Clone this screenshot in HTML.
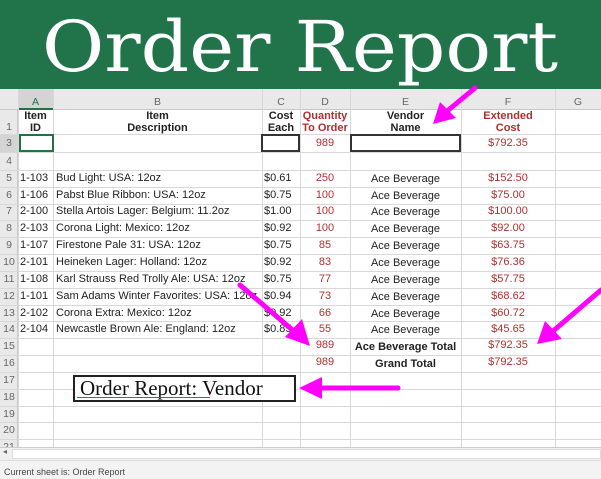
<!DOCTYPE html>
<html><head><meta charset="utf-8"><style>
*{margin:0;padding:0;box-sizing:border-box}
body{width:601px;height:479px;overflow:hidden;background:#fff;position:relative;font-family:"Liberation Sans",sans-serif;font-size:11px;color:#222}
.a{position:absolute}
.c{position:absolute;white-space:nowrap;line-height:17px;height:17px}
.r{color:#b03030}
.b{font-weight:bold}
.h{color:#666;text-align:center;font-size:10.5px}
</style></head><body>
<div class="a" style="left:0;top:0;width:601px;height:89px;background:#21734a"></div>
<svg class="a" style="left:0;top:0" width="601" height="89"><text x="42" y="71" textLength="516" lengthAdjust="spacingAndGlyphs" font-family="DejaVu Serif,serif" font-size="70" fill="#fff">Order Report</text></svg>
<div class="a" style="left:0;top:89px;width:601px;height:21px;background:#e9e9e9;border-bottom:1px solid #c8c8c8"></div>
<div class="a" style="left:0;top:110px;width:18px;height:337px;background:#e9e9e9;border-right:1px solid #c8c8c8"></div>
<div class="a" style="left:18px;top:89px;width:35px;height:21px;background:#d4d4d4;border-bottom:2px solid #217346"></div>
<div class="a" style="left:0;top:134px;width:18px;height:18px;background:#d4d4d4"></div>
<svg class="a" style="left:0;top:89px" width="601" height="358">
<g stroke="#d8d8d8" stroke-width="1">
<line x1="18.5" y1="0" x2="18.5" y2="358"/><line x1="53.5" y1="0" x2="53.5" y2="358"/><line x1="262.5" y1="0" x2="262.5" y2="358"/><line x1="300.5" y1="0" x2="300.5" y2="358"/><line x1="350.5" y1="0" x2="350.5" y2="358"/><line x1="461.5" y1="0" x2="461.5" y2="358"/><line x1="555.5" y1="0" x2="555.5" y2="358"/>
<line x1="0" y1="45.5" x2="601" y2="45.5"/><line x1="0" y1="63.5" x2="601" y2="63.5"/><line x1="0" y1="81.5" x2="601" y2="81.5"/>
<line x1="0" y1="98.5" x2="601" y2="98.5"/><line x1="0" y1="115.5" x2="601" y2="115.5"/><line x1="0" y1="131.5" x2="601" y2="131.5"/><line x1="0" y1="148.5" x2="601" y2="148.5"/><line x1="0" y1="165.5" x2="601" y2="165.5"/><line x1="0" y1="182.5" x2="601" y2="182.5"/><line x1="0" y1="199.5" x2="601" y2="199.5"/><line x1="0" y1="216.5" x2="601" y2="216.5"/><line x1="0" y1="232.5" x2="601" y2="232.5"/><line x1="0" y1="249.5" x2="601" y2="249.5"/><line x1="0" y1="266.5" x2="601" y2="266.5"/><line x1="0" y1="283.5" x2="601" y2="283.5"/><line x1="0" y1="300.5" x2="601" y2="300.5"/><line x1="0" y1="317.5" x2="601" y2="317.5"/><line x1="0" y1="333.5" x2="601" y2="333.5"/><line x1="0" y1="350.5" x2="601" y2="350.5"/>
</g></svg>
<div class="a" style="left:19px;top:134px;width:35px;height:18px;border:2px solid #217346"></div>
<div class="a" style="left:261px;top:134px;width:39px;height:18px;border:2px solid #333"></div>
<div class="a" style="left:350px;top:134px;width:111px;height:18px;border:2px solid #333"></div>
<div class="c h" style="left:18px;top:94px;width:35px;color:#217346">A</div>
<div class="c h" style="left:53px;top:94px;width:209px">B</div>
<div class="c h" style="left:262px;top:94px;width:38px">C</div>
<div class="c h" style="left:300px;top:94px;width:50px">D</div>
<div class="c h" style="left:350px;top:94px;width:111px">E</div>
<div class="c h" style="left:461px;top:94px;width:94px">F</div>
<div class="c h" style="left:555px;top:94px;width:46px">G</div>
<div class="a b" style="left:18px;top:110px;width:35px;text-align:center;line-height:12px">Item<br>ID</div>
<div class="a b" style="left:53px;top:110px;width:209px;text-align:center;line-height:12px">Item<br>Description</div>
<div class="a b" style="left:262px;top:110px;width:38px;text-align:center;line-height:12px">Cost<br>Each</div>
<div class="a b r" style="left:300px;top:110px;width:50px;text-align:center;line-height:12px">Quantity<br>To Order</div>
<div class="a b" style="left:350px;top:110px;width:111px;text-align:center;line-height:12px">Vendor<br>Name</div>
<div class="a b r" style="left:461px;top:110px;width:94px;text-align:center;line-height:12px">Extended<br>Cost</div>
<div class="c h" style="left:0;top:119px;width:18px">1</div>
<div class="c h" style="left:0;top:135px;width:18px">3</div>
<div class="c h" style="left:0;top:153px;width:18px">4</div>
<div class="c r" style="left:300px;top:135px;width:50px;text-align:center">989</div>
<div class="c r" style="left:461px;top:135px;width:94px;text-align:center">$792.35</div>
<div class="c h" style="left:0;top:170px;width:18px">5</div><div class="c" style="left:20px;top:170px">1-103</div><div class="c" style="left:56px;top:170px">Bud Light: USA: 12oz</div><div class="c" style="left:264px;top:170px">$0.61</div><div class="c r" style="left:300px;top:170px;width:50px;text-align:center">250</div><div class="c" style="left:350px;top:171px;width:111px;text-align:center">Ace Beverage</div><div class="c r" style="left:461px;top:170px;width:94px;text-align:center">$152.50</div>
<div class="c h" style="left:0;top:187px;width:18px">6</div><div class="c" style="left:20px;top:187px">1-106</div><div class="c" style="left:56px;top:187px">Pabst Blue Ribbon: USA: 12oz</div><div class="c" style="left:264px;top:187px">$0.75</div><div class="c r" style="left:300px;top:187px;width:50px;text-align:center">100</div><div class="c" style="left:350px;top:188px;width:111px;text-align:center">Ace Beverage</div><div class="c r" style="left:461px;top:187px;width:94px;text-align:center">$75.00</div>
<div class="c h" style="left:0;top:203px;width:18px">7</div><div class="c" style="left:20px;top:203px">2-100</div><div class="c" style="left:56px;top:203px">Stella Artois Lager: Belgium: 11.2oz</div><div class="c" style="left:264px;top:203px">$1.00</div><div class="c r" style="left:300px;top:203px;width:50px;text-align:center">100</div><div class="c" style="left:350px;top:204px;width:111px;text-align:center">Ace Beverage</div><div class="c r" style="left:461px;top:203px;width:94px;text-align:center">$100.00</div>
<div class="c h" style="left:0;top:220px;width:18px">8</div><div class="c" style="left:20px;top:220px">2-103</div><div class="c" style="left:56px;top:220px">Corona Light: Mexico: 12oz</div><div class="c" style="left:264px;top:220px">$0.92</div><div class="c r" style="left:300px;top:220px;width:50px;text-align:center">100</div><div class="c" style="left:350px;top:221px;width:111px;text-align:center">Ace Beverage</div><div class="c r" style="left:461px;top:220px;width:94px;text-align:center">$92.00</div>
<div class="c h" style="left:0;top:237px;width:18px">9</div><div class="c" style="left:20px;top:237px">1-107</div><div class="c" style="left:56px;top:237px">Firestone Pale 31: USA: 12oz</div><div class="c" style="left:264px;top:237px">$0.75</div><div class="c r" style="left:300px;top:237px;width:50px;text-align:center">85</div><div class="c" style="left:350px;top:238px;width:111px;text-align:center">Ace Beverage</div><div class="c r" style="left:461px;top:237px;width:94px;text-align:center">$63.75</div>
<div class="c h" style="left:0;top:254px;width:18px">10</div><div class="c" style="left:20px;top:254px">2-101</div><div class="c" style="left:56px;top:254px">Heineken Lager: Holland: 12oz</div><div class="c" style="left:264px;top:254px">$0.92</div><div class="c r" style="left:300px;top:254px;width:50px;text-align:center">83</div><div class="c" style="left:350px;top:255px;width:111px;text-align:center">Ace Beverage</div><div class="c r" style="left:461px;top:254px;width:94px;text-align:center">$76.36</div>
<div class="c h" style="left:0;top:271px;width:18px">11</div><div class="c" style="left:20px;top:271px">1-108</div><div class="c" style="left:56px;top:271px">Karl Strauss Red Trolly Ale: USA: 12oz</div><div class="c" style="left:264px;top:271px">$0.75</div><div class="c r" style="left:300px;top:271px;width:50px;text-align:center">77</div><div class="c" style="left:350px;top:272px;width:111px;text-align:center">Ace Beverage</div><div class="c r" style="left:461px;top:271px;width:94px;text-align:center">$57.75</div>
<div class="c h" style="left:0;top:288px;width:18px">12</div><div class="c" style="left:20px;top:288px">1-101</div><div class="c" style="left:56px;top:288px;width:206px;overflow:hidden">Sam Adams Winter Favorites: USA: 12oz</div><div class="c" style="left:264px;top:288px">$0.94</div><div class="c r" style="left:300px;top:288px;width:50px;text-align:center">73</div><div class="c" style="left:350px;top:289px;width:111px;text-align:center">Ace Beverage</div><div class="c r" style="left:461px;top:288px;width:94px;text-align:center">$68.62</div>
<div class="c h" style="left:0;top:305px;width:18px">13</div><div class="c" style="left:20px;top:305px">2-102</div><div class="c" style="left:56px;top:305px">Corona Extra: Mexico: 12oz</div><div class="c" style="left:264px;top:305px">$0.92</div><div class="c r" style="left:300px;top:305px;width:50px;text-align:center">66</div><div class="c" style="left:350px;top:306px;width:111px;text-align:center">Ace Beverage</div><div class="c r" style="left:461px;top:305px;width:94px;text-align:center">$60.72</div>
<div class="c h" style="left:0;top:321px;width:18px">14</div><div class="c" style="left:20px;top:321px">2-104</div><div class="c" style="left:56px;top:321px">Newcastle Brown Ale: England: 12oz</div><div class="c" style="left:264px;top:321px">$0.85</div><div class="c r" style="left:300px;top:321px;width:50px;text-align:center">55</div><div class="c" style="left:350px;top:322px;width:111px;text-align:center">Ace Beverage</div><div class="c r" style="left:461px;top:321px;width:94px;text-align:center">$45.65</div>
<div class="c h" style="left:0;top:338px;width:18px">15</div><div class="c r" style="left:300px;top:337px;width:50px;text-align:center">989</div><div class="c b" style="left:350px;top:339px;width:111px;text-align:center">Ace Beverage Total</div><div class="c r" style="left:461px;top:337px;width:94px;text-align:center">$792.35</div>
<div class="c h" style="left:0;top:355px;width:18px">16</div><div class="c r" style="left:300px;top:354px;width:50px;text-align:center">989</div><div class="c b" style="left:350px;top:356px;width:111px;text-align:center">Grand Total</div><div class="c r" style="left:461px;top:354px;width:94px;text-align:center">$792.35</div>
<div class="c h" style="left:0;top:372px;width:18px">17</div>
<div class="c h" style="left:0;top:389px;width:18px">18</div>
<div class="c h" style="left:0;top:406px;width:18px">19</div>
<div class="c h" style="left:0;top:422px;width:18px">20</div>
<div class="c h" style="left:0;top:439px;width:18px;height:8px;overflow:hidden">21</div>
<div class="a" style="left:73px;top:375px;width:223px;height:27px;border:2px solid #222;background:#fff;font-family:'Liberation Serif',serif;font-size:21px;line-height:23px;padding-left:5px;color:#111;white-space:nowrap">Order Report: Vendor</div>
<div class="a" style="left:77px;top:397px;width:133px;height:1px;background:#e03030"></div>
<div class="a" style="left:0;top:447px;width:601px;height:13px;background:#f0f0f0;border-top:1px solid #ccc"></div>
<div class="a" style="left:12px;top:449px;width:589px;height:10px;background:#fff;border:1px solid #ddd"></div>
<div class="a" style="left:3px;top:447px;font-size:8px;color:#666">&#9666;</div>
<div class="a" style="left:0;top:460px;width:601px;height:19px;background:#f3f3f3;border-top:1px solid #ddd;font-size:9px;color:#444;padding:6px 0 0 4px">Current sheet is: Order Report</div>
<svg class="a" style="left:0;top:0" width="601" height="479">
<g stroke="#ff00ff" stroke-width="5" stroke-linecap="round" fill="#ff00ff">
<line x1="475" y1="88" x2="446" y2="112"/>
<line x1="240" y1="285" x2="296" y2="333"/>
<line x1="601" y1="290" x2="552" y2="332"/>
<line x1="398" y1="388" x2="315" y2="388"/>
</g>
<g fill="#ff00ff">
<polygon points="433,124 440,102 456,118"/>
<polygon points="310,346 285,337 302,319"/>
<polygon points="537,344 545,321 562,339"/>
<polygon points="299,388 322,377 322,399"/>
</g></svg>
</body></html>
